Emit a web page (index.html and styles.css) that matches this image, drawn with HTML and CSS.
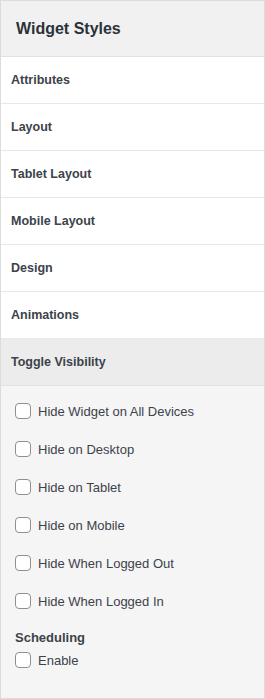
FILE: index.html
```html
<!DOCTYPE html>
<html lang="en">
<head>
    <meta charset="UTF-8">
    <meta name="viewport" content="width=device-width, initial-scale=1.0">
    <title>Widget Styles</title>
    <link rel="stylesheet" href="styles.css">
</head>
<body>
    <div class="panel">
        <div class="panel-header">
            <h2>Widget Styles</h2>
        </div>

        <!-- Collapsible sections -->
        <div class="section">Attributes</div>
        <div class="section">Layout</div>
        <div class="section">Tablet Layout</div>
        <div class="section">Mobile Layout</div>
        <div class="section">Design</div>
        <div class="section">Animations</div>
        <div class="section section-open">Toggle Visibility</div>

        <div class="section-body">
            <label class="check-row"><input type="checkbox"><span>Hide Widget on All Devices</span></label>
            <label class="check-row"><input type="checkbox"><span>Hide on Desktop</span></label>
            <label class="check-row"><input type="checkbox"><span>Hide on Tablet</span></label>
            <label class="check-row"><input type="checkbox"><span>Hide on Mobile</span></label>
            <label class="check-row"><input type="checkbox"><span>Hide When Logged Out</span></label>
            <label class="check-row"><input type="checkbox"><span>Hide When Logged In</span></label>

            <h3 class="sub-title">Scheduling</h3>
            <label class="check-row check-row-tight"><input type="checkbox"><span>Enable</span></label>
        </div>
    </div>
</body>
</html>
```

FILE: styles.css
```css
html, body {
    margin: 0;
    padding: 0;
}

body {
    font-family: "Liberation Sans", Arial, sans-serif;
    color: #3c434a;
    background: #fff;
}

.panel {
    width: 265px;
    height: 699px;
    box-sizing: border-box;
    border: 1px solid #dcdcde;
    display: flex;
    flex-direction: column;
}

/* Top header */
.panel-header {
    height: 55px;
    background-color: #f1f1f1;
    border-bottom: 1px solid #e2e2e2;
    display: flex;
    align-items: center;
    padding: 0 15px;
}
.panel-header h2 {
    margin: 0;
    font-size: 16px;
    font-weight: bold;
    color: #2c3338;
}

/* Section rows */
.section {
    height: 46px;
    border-bottom: 1px solid #e8e8e8;
    display: flex;
    align-items: center;
    padding: 0 10px;
    font-size: 12.5px;
    font-weight: bold;
    color: #3c434a;
    background: #fff;
}
.section-open {
    background-color: #ececec;
    border-bottom-color: #e2e2e2;
}

.section-body {
    flex: 1;
    background-color: #f5f5f5;
    padding: 6px 14px 0;
}

/* Checkbox rows */
.check-row {
    display: flex;
    align-items: center;
    height: 38px;
    font-size: 13px;
    color: #3c434a;
}
.check-row input {
    appearance: none;
    -webkit-appearance: none;
    width: 16px;
    height: 16px;
    margin: 0 7px 0 0;
    border: 1px solid #8c8f94;
    border-radius: 4px;
    background: #fff;
    box-sizing: border-box;
}
.check-row-tight {
    height: 22px;
}

.sub-title {
    margin: 10px 0 3px;
    font-size: 13px;
    font-weight: bold;
    line-height: 16px;
    color: #3c434a;
}
```
